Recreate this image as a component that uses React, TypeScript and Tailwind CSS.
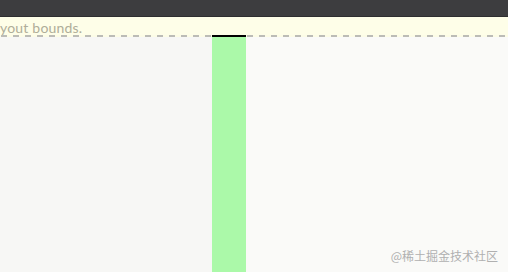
export default function App() {
  const dashes =
    "bg-[repeating-linear-gradient(to_right,transparent_0px,transparent_1px,#bcbcb6_1px,#bcbcb6_7px,transparent_7px,transparent_12px)]";

  return (
    <div className="w-[508px] h-[272px] flex flex-col overflow-hidden bg-[#f8f8f6] font-['Lato',sans-serif]">
      <div className="h-[17px] bg-[#3d3d3f] border-b border-[#2e2e30]" />
      <div className="h-[18px] bg-[#fefee8] text-[14px] leading-[18px] pt-[2px] text-[#afad99] tracking-[0.2px]">
        yout bounds.
      </div>
      <div className="flex-1 flex relative">
        <div className="w-[212px] flex flex-col">
          <div className={`h-[2px] bg-[#fcfce6] ${dashes}`} />
          <div className="flex-1 bg-[#f7f7f5]" />
        </div>
        <div className="w-[34px] border-t-2 border-black bg-[#abf9a9]" />
        <div className="flex-1 flex flex-col">
          <div className={`h-[2px] bg-[#fcfce6] ${dashes}`} />
          <div className="flex-1 bg-[#fafaf8]" />
        </div>
        <div className="absolute right-[10px] bottom-[10px] text-[12px] text-[#b0b0b0] font-['Noto_Sans_CJK_SC',sans-serif] leading-none">
          @稀土掘金技术社区
        </div>
      </div>
    </div>
  );
}
